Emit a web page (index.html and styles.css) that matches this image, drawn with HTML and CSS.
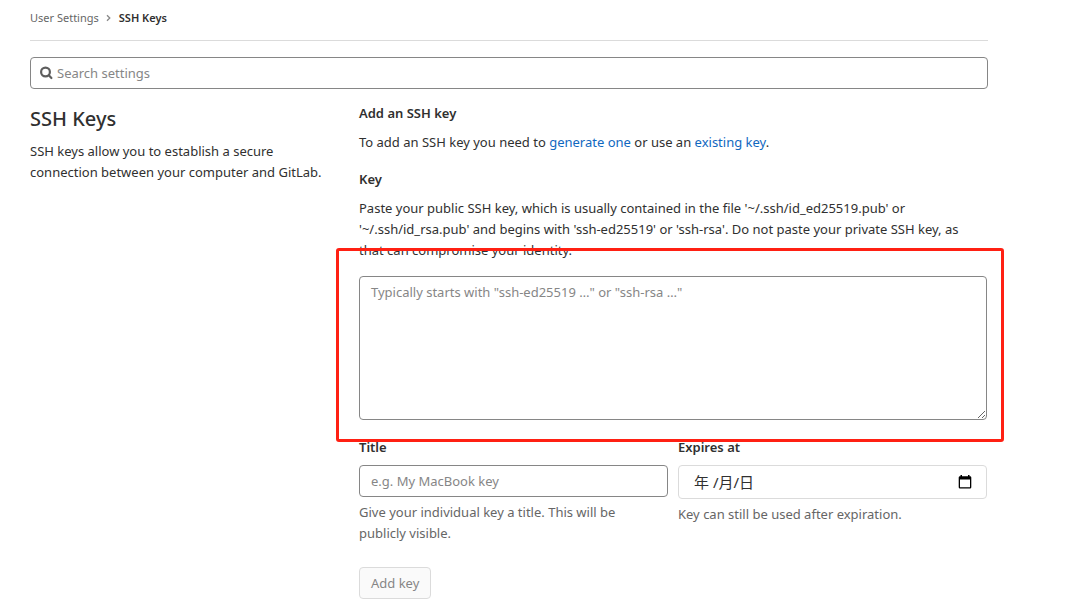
FILE: index.html
```html
<!DOCTYPE html>
<html lang="en">
<head>
<meta charset="utf-8">
<meta name="viewport" content="width=device-width, initial-scale=1">
<title>SSH Keys · User Settings</title>
<link rel="stylesheet" href="styles.css">
</head>
<body>
<div class="page">
  <nav class="breadcrumbs" aria-label="Breadcrumbs">
    <a class="crumb" href="#settings">User Settings</a>
    <svg class="chevron" viewBox="0 0 8 8" aria-hidden="true"><path d="M2 1.2 4.8 4 2 6.8"/></svg>
    <a class="crumb crumb-current" href="#ssh" aria-current="page">SSH Keys</a>
  </nav>

  <div class="search">
    <svg class="search-icon" viewBox="0 0 14 14" aria-hidden="true"><circle cx="6.5" cy="6" r="4.4"/><path d="M9.8 9.3 12.4 12"/></svg>
    <input class="search-input" type="search" placeholder="Search settings" aria-label="Search settings">
  </div>

  <main class="settings">
    <section class="intro">
      <h1 class="title">SSH Keys</h1>
      <p class="text">SSH keys allow you to establish a secure connection between your computer and GitLab.</p>
    </section>

    <form class="form">
      <h2 class="subtitle">Add an SSH key</h2>
      <p class="text lead">To add an SSH key you need to <a class="link" href="#generate">generate one</a> or use an <a class="link" href="#existing">existing key</a>.</p>
      <label class="label" for="key">Key</label>
      <p class="text key-help">Paste your public SSH key, which is usually contained in the file '~/.ssh/id_ed25519.pub' or '~/.ssh/id_rsa.pub' and begins with 'ssh-ed25519' or 'ssh-rsa'. Do not paste your private SSH key, as that can compromise your identity.</p>
      <div class="key-area">
        <textarea class="control key-input" id="key" placeholder="Typically starts with &quot;ssh-ed25519 …&quot; or &quot;ssh-rsa …&quot;"></textarea>
        <div class="highlight"></div>
      </div>
      <div class="fields">
        <div class="field">
          <label class="label" for="title">Title</label>
          <input class="control title-input" id="title" type="text" placeholder="e.g. My MacBook key">
          <p class="text hint">Give your individual key a title. This will be publicly visible.</p>
        </div>
        <div class="field">
          <label class="label" for="expires">Expires at</label>
          <div class="date">
            <input class="date-input" id="expires" type="text" value="年 /月/日">
            <button class="date-button" type="button" aria-label="Show date picker">
              <svg class="calendar" viewBox="0 0 14 14" aria-hidden="true"><path fill-rule="evenodd" d="M2.5 0H4v1.2h6V0h1.5v1.2H12A1.3 1.3 0 0 1 13.3 2.5v9.7a1.3 1.3 0 0 1-1.3 1.3H2A1.3 1.3 0 0 1 .7 12.2V2.5A1.3 1.3 0 0 1 2 1.2h.5ZM2 4.5v7.7h10V4.5Z"/></svg>
            </button>
          </div>
          <p class="text hint">Key can still be used after expiration.</p>
        </div>
      </div>
      <button class="submit" type="submit" disabled>Add key</button>
    </form>
  </main>
</div>
</body>
</html>
```
FILE: styles.css
```css
* {
  box-sizing: border-box;
}

body {
  margin: 0;
  background: #fff;
  color: #303030;
  font: 13px/21px "Noto Sans", "Open Sans", "Noto Sans CJK SC", sans-serif;
}

h1, h2, p {
  margin: 0;
}

input, textarea, button {
  font: inherit;
}

a {
  text-decoration: none;
}

.page {
  padding: 0 84px 12px 30px;
}

.breadcrumbs {
  display: flex;
  align-items: center;
  gap: 6px;
  height: 41px;
  padding-bottom: 5px;
  border-bottom: 1px solid #dbdbdb;
  font-size: 11px;
}

.crumb {
  color: #666;
}

.crumb-current {
  color: #303030;
  font-weight: 600;
}

.chevron {
  width: 8px;
  height: 8px;
  fill: none;
  stroke: #888;
  stroke-width: 1.3;
}

.search {
  display: flex;
  align-items: center;
  gap: 4px;
  height: 32px;
  margin-top: 16px;
  padding: 0 8px;
  border: 1px solid #868686;
  border-radius: 4px;
}

.search-icon {
  width: 14px;
  height: 14px;
  fill: none;
  stroke: #5e5e5e;
  stroke-width: 2.2;
  stroke-linecap: round;
}

.search-input {
  flex: 1;
  padding: 0;
  border: 0;
  outline: 0;
  background: none;
}

::placeholder {
  color: #868686;
  opacity: 1;
}

.settings {
  display: grid;
  grid-template-columns: 1fr 2fr;
  gap: 15px;
  margin-top: 14px;
  padding-right: 1px;
}

.intro {
  padding-right: 12px;
}

.title {
  margin: 4px 0 10px;
  font-size: 20px;
  line-height: 24px;
  font-weight: 500;
}

.subtitle,
.label {
  display: block;
  font-size: 13px;
  line-height: 21px;
  font-weight: 600;
}

.lead {
  margin: 8px 0 16px;
}

.link {
  color: #1068bf;
}

.key-help {
  margin: 8px 0 15px;
  padding-right: 12px;
}

.key-area {
  position: relative;
}

.control {
  display: block;
  width: 100%;
  border: 1px solid #868686;
  border-radius: 4px;
  background: #fff;
}

.key-input {
  height: 144px;
  padding: 5px 11px;
  resize: vertical;
}

.highlight {
  position: absolute;
  inset: -28px -17px -22px -23px;
  border: 3px solid #ff2013;
  border-radius: 3px;
  pointer-events: none;
}

.fields {
  display: grid;
  grid-template-columns: 1fr 1fr;
  gap: 10px;
  margin-top: 17px;
}

.title-input {
  height: 32px;
  margin-top: 7px;
  padding: 0 11px;
}

.date {
  display: flex;
  align-items: center;
  height: 34px;
  margin-top: 7px;
  padding: 0 14px 0 15px;
  border: 1px solid #dbdbdb;
  border-radius: 4px;
}

.date-input {
  flex: 1;
  min-width: 0;
  padding: 0;
  border: 0;
  outline: 0;
  background: none;
  color: #303030;
  font-size: 15px;
}

.date-button {
  display: flex;
  padding: 0;
  border: 0;
  background: none;
}

.calendar {
  width: 14px;
  height: 14px;
}

.hint {
  margin-top: 5px;
  padding-right: 12px;
  color: #666;
}

.submit {
  height: 32px;
  margin-top: 23px;
  padding: 0 11px;
  border: 1px solid #dbdbdb;
  border-radius: 4px;
  background: #fafafa;
  color: #868686;
}
```
